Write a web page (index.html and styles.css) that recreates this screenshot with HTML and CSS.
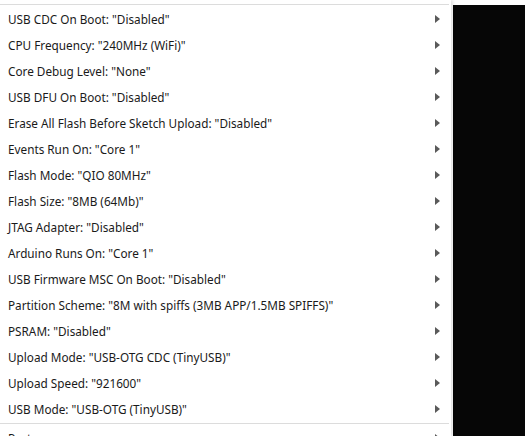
FILE: index.html
```html
<!DOCTYPE html>
<html>
<head>
<meta charset="utf-8">
<link rel="stylesheet" href="styles.css">
</head>
<body>
<div class="screen">
  <div class="menu">
    <div class="sep top"></div>
    <div class="item"><span>USB CDC On Boot: "Disabled"</span><i class="arrow"></i></div>
    <div class="item"><span>CPU Frequency: "240MHz (WiFi)"</span><i class="arrow"></i></div>
    <div class="item"><span>Core Debug Level: "None"</span><i class="arrow"></i></div>
    <div class="item"><span>USB DFU On Boot: "Disabled"</span><i class="arrow"></i></div>
    <div class="item"><span>Erase All Flash Before Sketch Upload: "Disabled"</span><i class="arrow"></i></div>
    <div class="item"><span>Events Run On: "Core 1"</span><i class="arrow"></i></div>
    <div class="item"><span>Flash Mode: "QIO 80MHz"</span><i class="arrow"></i></div>
    <div class="item"><span>Flash Size: "8MB (64Mb)"</span><i class="arrow"></i></div>
    <div class="item"><span>JTAG Adapter: "Disabled"</span><i class="arrow"></i></div>
    <div class="item"><span>Arduino Runs On: "Core 1"</span><i class="arrow"></i></div>
    <div class="item"><span>USB Firmware MSC On Boot: "Disabled"</span><i class="arrow"></i></div>
    <div class="item"><span>Partition Scheme: "8M with spiffs (3MB APP/1.5MB SPIFFS)"</span><i class="arrow"></i></div>
    <div class="item"><span>PSRAM: "Disabled"</span><i class="arrow"></i></div>
    <div class="item"><span>Upload Mode: "USB-OTG CDC (TinyUSB)"</span><i class="arrow"></i></div>
    <div class="item"><span>Upload Speed: "921600"</span><i class="arrow"></i></div>
    <div class="item"><span>USB Mode: "USB-OTG (TinyUSB)"</span><i class="arrow"></i></div>
    <div class="sep bottom"></div>
    <div class="item"><span>Port</span><i class="arrow"></i></div>
  </div>
  <div class="dark"></div>
</div>
</body>
</html>
```
FILE: styles.css
```css
html, body {
  margin: 0;
  padding: 0;
  background: #ffffff;
  overflow: hidden;
}
.screen {
  display: flex;
  width: 525px;
  height: 436px;
  overflow: hidden;
}
.menu {
  width: 451px;
  flex: none;
  background: #ffffff;
  padding-top: 4px;
  box-shadow: 2px 0 3px rgba(0, 0, 0, 0.12);
  position: relative;
  z-index: 1;
  font-family: "Segoe UI", "Noto Sans", sans-serif;
  font-size: 11.75px;
  color: #1a1a1a;
}
.sep {
  height: 1px;
  background: #dcdcdc;
  margin-right: 2px;
}
.sep.top {
  margin-bottom: 1px;
}
.sep.bottom {
  margin-top: 1px;
  margin-bottom: 1px;
}
.item {
  height: 26px;
  display: flex;
  align-items: center;
  justify-content: space-between;
  padding-left: 8px;
  padding-right: 11px;
  line-height: 26px;
}
.arrow {
  width: 0;
  height: 0;
  border-top: 4px solid transparent;
  border-bottom: 4px solid transparent;
  border-left: 5px solid #5a5a5a;
}
.dark {
  flex: 1;
  margin-top: 5px;
  margin-left: 2px;
  background: #060606;
}
```
